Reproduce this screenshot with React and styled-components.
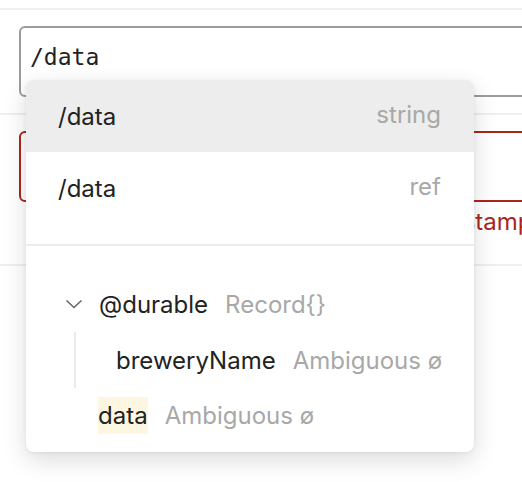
import React from "react";
import styled, { createGlobalStyle } from "styled-components";

const Global = createGlobalStyle`
  html, body { margin: 0; padding: 0; background: #fff; }
  body { font-family: Inter, "Noto Sans", sans-serif; overflow: hidden; }
`;

const Page = styled.div`
  position: relative;
  width: 522px;
  height: 482px;
  overflow: hidden;
  padding-top: 8px;
  box-sizing: border-box;
`;

const Rule = styled.div`
  height: 2px;
  background: #efefef;
  width: 100%;
`;

const Section = styled.div`
  padding: ${(p) => p.$pad};
`;

const PathInput = styled.div`
  box-sizing: border-box;
  width: 560px;
  height: 71px;
  border: 2px solid #9c9c9c;
  border-radius: 6px;
  padding: 14px 0 0 9px;
  font-family: "DejaVu Sans Mono", "Liberation Mono", monospace;
  font-size: 23px;
  line-height: 30px;
  color: #222;
`;

const ErrorBox = styled.div`
  box-sizing: border-box;
  width: 560px;
  height: 71px;
  border: 2px solid #a8271c;
  border-radius: 6px;
`;

const ErrorText = styled.div`
  margin-top: 6px;
  padding-left: 395px;
  white-space: nowrap;
  font-size: 24px;
  line-height: 28px;
  color: #a8271c;
`;

const Menu = styled.div`
  position: absolute;
  left: 26px;
  top: 80px;
  width: 448px;
  height: 372px;
  background: #fff;
  border-radius: 8px;
  overflow: hidden;
  box-shadow: 0 8px 24px rgba(0, 0, 0, 0.14), 0 1px 4px rgba(0, 0, 0, 0.06);
  display: flex;
  flex-direction: column;
`;

const Option = styled.div`
  height: 72px;
  display: flex;
  align-items: center;
  justify-content: space-between;
  padding: 0 33px 0 32px;
  background: ${(p) => (p.$active ? "#ededed" : "#fff")};
  font-size: 24px;
  color: #222;
`;

const OptionType = styled.span`
  color: #a8a8a8;
  position: relative;
  top: ${(p) => p.$shift || 0}px;
`;

const MenuDivider = styled.div`
  margin-top: 20px;
  height: 2px;
  background: #ededed;
`;

const Tree = styled.div`
  padding: 30px 0 0 39px;
  display: flex;
  flex-direction: column;
  font-size: 24px;
  line-height: 29px;
  color: #222;
`;

const TreeRow = styled.div`
  display: flex;
  align-items: center;
  height: ${(p) => p.$h || 56}px;
  padding-left: ${(p) => p.$indent || 0}px;
  gap: 17px;
`;

const Toggle = styled.span`
  display: flex;
  align-items: center;
`;

const Chevron = styled.svg`
  width: 18px;
  height: 10px;
  margin-right: 16px;
  flex: none;
`;

const Name = styled.span`
  color: #222;
  background: ${(p) => (p.$hl ? "#fdf7e2" : "transparent")};
  padding: ${(p) => (p.$hl ? "4px 0" : "0")};
`;

const TypeLabel = styled.span`
  color: #a8a8a8;
`;

const Children = styled.div`
  margin-left: 9px;
  border-left: 2px solid #ececec;
  padding-left: 40px;
  height: 56px;
  display: flex;
  align-items: center;
  gap: 17px;
`;

export default function App() {
  return (
    <>
      <Global />
      <Page>
        <Rule />
        <Section $pad="16px 0 16px 19px">
          <PathInput>/data</PathInput>
        </Section>
        <Rule />
        <Section $pad="16px 0 28px 19px">
          <ErrorBox />
          <ErrorText>timestamp</ErrorText>
        </Section>
        <Rule />

        <Menu>
          <Option $active>
            <span>/data</span>
            <OptionType $shift={-2}>string</OptionType>
          </Option>
          <Option>
            <span>/data</span>
            <OptionType $shift={-2}>ref</OptionType>
          </Option>
          <MenuDivider />
          <Tree>
            <TreeRow $h={56}>
              <Toggle>
                <Chevron viewBox="0 0 18 10">
                  <path
                    d="M1.5 1.5 L9 8.5 L16.5 1.5"
                    fill="none"
                    stroke="#666"
                    strokeWidth="1.6"
                  />
                </Chevron>
                <Name>@durable</Name>
              </Toggle>
              <TypeLabel>Record{"{}"}</TypeLabel>
            </TreeRow>
            <Children>
              <Name>breweryName</Name>
              <TypeLabel>Ambiguous ø</TypeLabel>
            </Children>
            <TreeRow $h={54} $indent={33}>
              <Name $hl>data</Name>
              <TypeLabel>Ambiguous ø</TypeLabel>
            </TreeRow>
          </Tree>
        </Menu>
      </Page>
    </>
  );
}
